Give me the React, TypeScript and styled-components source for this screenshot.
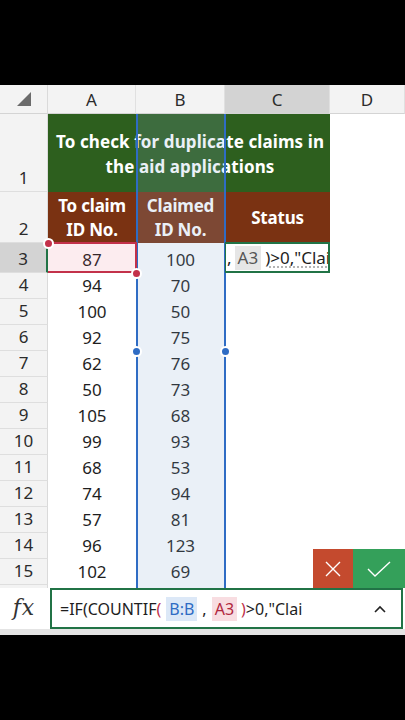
import React from "react";
import styled, { createGlobalStyle, css } from "styled-components";

const GlobalStyle = createGlobalStyle`
  html, body { margin: 0; padding: 0; background: #000; }
  * { box-sizing: border-box; }
`;

const FONT = `"Noto Sans", Roboto, "Liberation Sans", sans-serif`;

const Page = styled.div`
  width: 405px;
  height: 720px;
  background: #000;
  display: flex;
  flex-direction: column;
  overflow: hidden;
  font-family: ${FONT};
`;

const TopBar = styled.div`
  height: 85px;
  flex: none;
  background: #000;
`;

const SheetArea = styled.div`
  position: relative;
  height: 503px;
  flex: none;
  overflow: hidden;
  background: #fff;
`;

const Grid = styled.div`
  display: grid;
  grid-template-columns: 48px 88px 89px 105px 1fr;
  grid-template-rows: 29px 78px 51px 30px repeat(13, 26px);
`;

const Corner = styled.div`
  background: #f3f3f3;
  border-right: 1px solid #dadada;
  border-bottom: 1px solid #d4d4d4;
  display: flex;
  align-items: center;
  justify-content: center;
`;

const ColHeader = styled.div<{ $active?: boolean }>`
  background: ${(p) => (p.$active ? "#d3d3d3" : "#f3f3f3")};
  border-right: 1px solid #e0e0e0;
  border-bottom: 1px solid #d4d4d4;
  display: flex;
  align-items: center;
  justify-content: center;
  font-size: 17px;
  color: #2b2b2b;
`;

const RowHeader = styled.div<{ $active?: boolean }>`
  background: ${(p) => (p.$active ? "#d3d3d3" : "#f3f3f3")};
  border-bottom: 1px solid #dedede;
  border-right: ${(p) => (p.$active ? "2px solid #217346" : "1px solid #dadada")};
  display: flex;
  align-items: flex-end;
  justify-content: center;
  padding-bottom: 2px;
  font-size: 17px;
  color: #2b2b2b;
  line-height: 22px;
`;

const TitleCell = styled.div`
  grid-column: span 3;
  background: #2d5f1e;
  color: #fff;
  font-weight: 700;
  font-size: 17px;
  line-height: 25px;
  display: flex;
  align-items: center;
  justify-content: center;
  text-align: center;
  padding: 2px 2px 0 4px;
  letter-spacing: 0.1px;
  white-space: nowrap;
`;

const SubHeader = styled.div`
  background: #7a3212;
  color: #fff;
  font-weight: 700;
  font-size: 17px;
  line-height: 24px;
  display: flex;
  align-items: center;
  justify-content: center;
  text-align: center;
  letter-spacing: -0.2px;
`;

const Cell = styled.div`
  display: flex;
  align-items: flex-end;
  justify-content: center;
  padding-bottom: 2px;
  font-size: 17px;
  line-height: 22px;
  color: #1e1e1e;
`;

const ColSelection = styled.div`
  position: absolute;
  left: 136px;
  top: 29px;
  width: 90px;
  bottom: 0;
  background: rgba(140, 170, 210, 0.18);
  border-left: 2px solid #2f6cc4;
  border-right: 2px solid #2f6cc4;
  pointer-events: none;
`;

const Handle = styled.div<{ $color: string; $x: number; $y: number }>`
  position: absolute;
  width: 11px;
  height: 11px;
  border-radius: 50%;
  background: ${(p) => p.$color};
  border: 2px solid #fff;
  left: ${(p) => p.$x - 5.5}px;
  top: ${(p) => p.$y - 5.5}px;
`;

const RefBox = styled.div`
  position: absolute;
  left: 48px;
  top: 157px;
  width: 89px;
  height: 31px;
  background: rgba(230, 100, 120, 0.12);
  border: 2px solid #c3314a;
  border-left: none;
  pointer-events: none;
`;

const EditCell = styled.div`
  position: absolute;
  left: 225px;
  top: 157px;
  width: 105px;
  height: 31px;
  background: #fff;
  border: 2px solid #217346;
  display: flex;
  align-items: center;
  justify-content: flex-start;
  overflow: hidden;
  white-space: nowrap;
  font-size: 17px;
  color: #1e1e1e;
  padding-left: 1px;
  border-left-width: 1px;
`;

const chipBase = css`
  display: inline-block;
  padding: 0 4px;
  line-height: 24px;
`;

const GreyChip = styled.span`
  ${chipBase};
  background: #e6e6e6;
  color: #555;
  padding: 0 3px;
  margin: 0 4px 0 3px;
`;

const Underlined = styled.span`
  text-decoration: underline;
  text-decoration-color: #9a9a9a;
  text-decoration-style: dotted;
  text-underline-offset: 3px;
`;

const ActionRow = styled.div`
  position: absolute;
  right: 0;
  bottom: 0;
  display: flex;
`;

const ActionButton = styled.div<{ $bg: string; $w: number }>`
  width: ${(p) => p.$w}px;
  height: 39px;
  background: ${(p) => p.$bg};
  display: flex;
  align-items: center;
  justify-content: center;
`;

const FormulaBar = styled.div`
  height: 41px;
  flex: none;
  background: #fff;
  display: flex;
  align-items: stretch;
`;

const FxLabel = styled.div`
  width: 50px;
  flex: none;
  display: flex;
  align-items: center;
  justify-content: center;
`;

const FxGlyph = styled.span`
  display: inline-block;
  font-family: "DejaVu Serif", "Liberation Serif", serif;
  font-style: italic;
  font-size: 22px;
  line-height: 34px;
  color: #333;
  padding: 0 6px 2px 4px;
  letter-spacing: 1px;
`;

const FormulaInput = styled.div`
  flex: 1;
  margin-right: 2px;
  border: 2px solid #217346;
  display: flex;
  align-items: center;
  padding-left: 8px;
  padding-right: 14px;
  font-size: 16px;
  color: #1e1e1e;
  white-space: nowrap;
`;

const FormulaText = styled.div`
  flex: 1;
  display: flex;
  align-items: center;
`;

const Paren = styled.span`
  color: #c0304a;
`;

const BlueChip = styled.span`
  ${chipBase};
  background: #dce8f7;
  color: #2f6cc4;
  padding: 0 3px;
  margin: 0 5px 0 5px;
`;

const PinkChip = styled.span`
  ${chipBase};
  background: #f8dde1;
  color: #b0263e;
  padding: 0 3px;
  margin: 0 4px 0 5px;
`;

const Strip = styled.div`
  height: 6px;
  flex: none;
  background: #e4e4e4;
`;

const BottomBlack = styled.div`
  flex: 1;
  background: #000;
`;

const colA = [87, 94, 100, 92, 62, 50, 105, 99, 68, 74, 57, 96, 102, ""];
const colB = [100, 70, 50, 75, 76, 73, 68, 93, 53, 94, 81, 123, 69, ""];

export default function App() {
  return (
    <>
      <GlobalStyle />
      <Page>
        <TopBar />
        <SheetArea>
          <Grid>
            <Corner>
              <svg width="16" height="16" viewBox="0 0 16 16">
                <path d="M15 1 L15 15 L1 15 Z" fill="#6b6b6b" />
              </svg>
            </Corner>
            <ColHeader>A</ColHeader>
            <ColHeader>B</ColHeader>
            <ColHeader $active>C</ColHeader>
            <ColHeader>D</ColHeader>

            <RowHeader>1</RowHeader>
            <TitleCell>
              To check for duplicate claims in
              <br />
              the aid applications
            </TitleCell>
            <Cell />

            <RowHeader>2</RowHeader>
            <SubHeader>
              To claim
              <br />
              ID No.
            </SubHeader>
            <SubHeader>
              Claimed
              <br />
              ID No.
            </SubHeader>
            <SubHeader>Status</SubHeader>
            <Cell />

            {colA.map((a, i) => (
              <React.Fragment key={i}>
                <RowHeader $active={i === 0}>{i + 3}</RowHeader>
                <Cell>{a}</Cell>
                <Cell>{colB[i]}</Cell>
                <Cell />
                <Cell />
              </React.Fragment>
            ))}
          </Grid>

          <ColSelection />
          <RefBox />
          <EditCell>
            ,<GreyChip>A3</GreyChip>
            <Underlined>)&gt;0,"Clai</Underlined>
          </EditCell>
          <Handle $color="#c3314a" $x={48} $y={158} />
          <Handle $color="#c3314a" $x={136} $y={188} />
          <Handle $color="#2f6cc4" $x={136} $y={266} />
          <Handle $color="#2f6cc4" $x={225} $y={266} />

          <ActionRow>
            <ActionButton $bg="#c44a2e" $w={40}>
              <svg width="20" height="20" viewBox="0 0 20 20">
                <path d="M3 3 L17 17 M17 3 L3 17" stroke="#fff" strokeWidth="1.4" fill="none" />
              </svg>
            </ActionButton>
            <ActionButton $bg="#34a05a" $w={52}>
              <svg width="26" height="20" viewBox="0 0 26 20">
                <path d="M2 10 L9 17 L24 3" stroke="#fff" strokeWidth="1.4" fill="none" />
              </svg>
            </ActionButton>
          </ActionRow>
        </SheetArea>

        <FormulaBar>
          <FxLabel>
            <FxGlyph>fx</FxGlyph>
          </FxLabel>
          <FormulaInput>
            <FormulaText>
              =IF(COUNTIF<Paren>(</Paren>
              <BlueChip>B:B</BlueChip>,<PinkChip>A3</PinkChip>
              <Paren>)</Paren>&gt;0,"Clai
            </FormulaText>
            <svg width="14" height="10" viewBox="0 0 14 10">
              <path d="M2 8 L7 3 L12 8" stroke="#222" strokeWidth="1.6" fill="none" />
            </svg>
          </FormulaInput>
        </FormulaBar>
        <Strip />
        <BottomBlack />
      </Page>
    </>
  );
}
